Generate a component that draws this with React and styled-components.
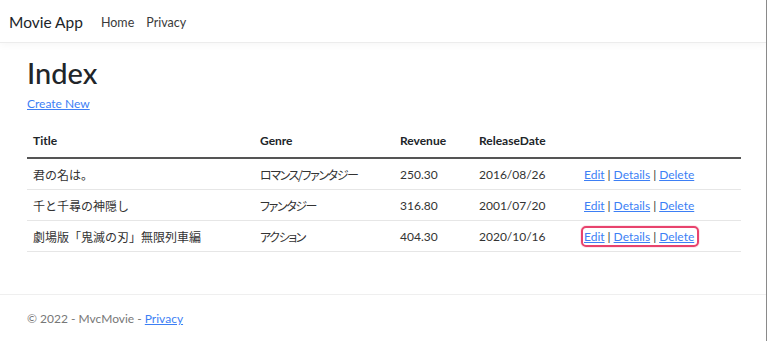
import React from "react";
import styled, { createGlobalStyle } from "styled-components";

const Global = createGlobalStyle`
  html, body { margin: 0; padding: 0; background: #fff; }
  body {
    font-family: "Lato", "Noto Sans CJK JP", sans-serif;
    color: #212529;
    font-size: 12px;
  }
`;

const Page = styled.div`
  width: 767px;
  height: 341px;
  border-right: 1px solid #8a8a8a;
  box-sizing: border-box;
  display: flex;
  flex-direction: column;
  overflow: hidden;
`;

const NavBar = styled.header`
  height: 43px;
  box-sizing: border-box;
  padding: 2px 0 0 9px;
  flex: none;
  display: flex;
  align-items: center;
  border-bottom: 1px solid #ececec;
  box-shadow: 0 2px 8px rgba(0, 0, 0, 0.04);
  background: #fff;
`;

const Brand = styled.a`
  font-size: 15.5px;
  color: #212529;
  text-decoration: none;
  margin-right: 18px;
`;

const NavLink = styled.a`
  font-size: 12.5px;
  color: #3a3a3a;
  text-decoration: none;
  margin-right: 12px;
`;

const Main = styled.main`
  padding: 12px 27px 0 27px;
  flex: 1;
`;

const Heading = styled.h1`
  margin: 0;
  font-size: 29px;
  font-weight: 500;
  line-height: 36px;
`;

const Link = styled.a`
  color: #3d7ff5;
  text-decoration: underline;
  font-size: 12px;
`;

const CreateRow = styled.p`
  margin: 4px 0 0 0;
  line-height: 18px;
`;

const Table = styled.table`
  margin-top: 12px;
  width: 714px;
  border-collapse: collapse;
  table-layout: fixed;
  font-size: 12px;
`;

const Th = styled.th`
  box-sizing: border-box;
  text-align: left;
  font-weight: 700;
  padding: 0 6px 1px;
  height: 33px;
  border-bottom: 2px solid #555;
  width: ${(p) => p.$w || "auto"};
`;

const Td = styled.td`
  padding: 0 6px;
  height: 30px;
  border-bottom: 1px solid #e6e6e6;
  color: #333;
  white-space: nowrap;
`;

const Jp = styled.span`
  font-family: "Noto Sans CJK JP", sans-serif;
  font-size: 12px;
  color: #333;
  ${(p) =>
    p.$kana &&
    `
    font-feature-settings: "palt";
    letter-spacing: -1.4px;
  `}
`;

const Actions = styled.span`
  display: inline-block;
  padding: 1px 3px 1px 1px;
  margin-left: -1px;
  ${(p) =>
    p.$hl &&
    `
    outline: 2px solid #e8436d;
    outline-offset: 0px;
    border-radius: 3px;
    box-shadow: 0 0 0 3px rgba(232,67,109,0.12);
  `}
`;

const Sep = styled.span`
  color: #333;
  margin: 0 3px;
`;

const Footer = styled.footer`
  flex: none;
  height: 47px;
  border-top: 1px solid #efefef;
  padding: 16px 27px 0;
  color: #777;
  font-size: 12px;
  box-sizing: border-box;
`;

const rows = [
  ["君の名は。", "ロマンス/ファンタジー", "250.30", "2016/08/26"],
  ["千と千尋の神隠し", "ファンタジー", "316.80", "2001/07/20"],
  ["劇場版「鬼滅の刃」無限列車編", "アクション", "404.30", "2020/10/16"],
];

export default function App() {
  return (
    <>
      <Global />
      <Page>
        <NavBar>
          <Brand href="#">Movie App</Brand>
          <NavLink href="#">Home</NavLink>
          <NavLink href="#">Privacy</NavLink>
        </NavBar>
        <Main>
          <Heading>Index</Heading>
          <CreateRow>
            <Link href="#">Create New</Link>
          </CreateRow>
          <Table>
            <thead>
              <tr>
                <Th $w="227px">Title</Th>
                <Th $w="140px">Genre</Th>
                <Th $w="79px">Revenue</Th>
                <Th $w="105px">ReleaseDate</Th>
                <Th></Th>
              </tr>
            </thead>
            <tbody>
              {rows.map((r, i) => (
                <tr key={i}>
                  <Td><Jp>{r[0]}</Jp></Td>
                  <Td><Jp $kana>{r[1]}</Jp></Td>
                  <Td>{r[2]}</Td>
                  <Td>{r[3]}</Td>
                  <Td>
                    <Actions $hl={i === 2}>
                      <Link href="#">Edit</Link>
                      <Sep>|</Sep>
                      <Link href="#">Details</Link>
                      <Sep>|</Sep>
                      <Link href="#">Delete</Link>
                    </Actions>
                  </Td>
                </tr>
              ))}
            </tbody>
          </Table>
        </Main>
        <Footer>
          © 2022 - MvcMovie - <Link href="#">Privacy</Link>
        </Footer>
      </Page>
    </>
  );
}
